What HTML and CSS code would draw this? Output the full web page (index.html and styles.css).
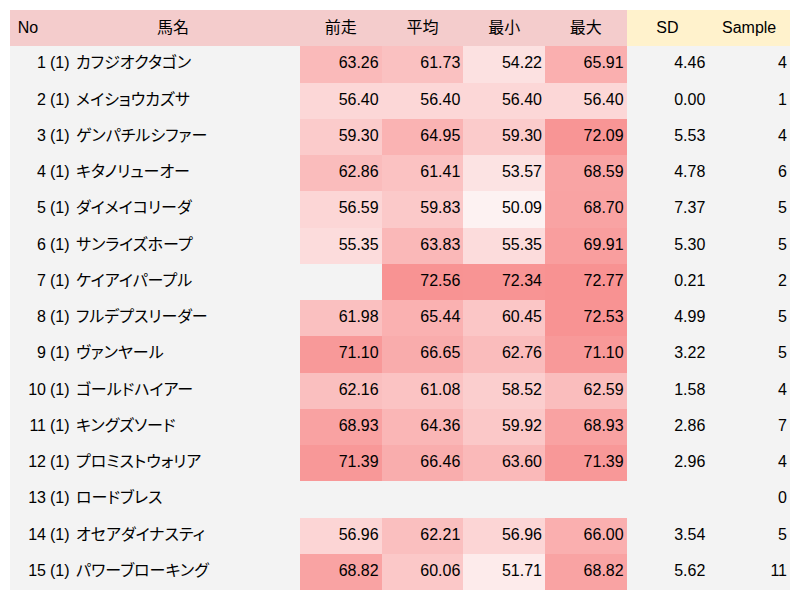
FILE: index.html
```html
<!DOCTYPE html>
<html lang="ja">
<head>
<meta charset="utf-8">
<title>馬名</title>
<link rel="stylesheet" href="styles.css">
</head>
<body>
<table class="grid">
  <colgroup>
    <col class="c-no"><col class="c-name"><col class="c-val"><col class="c-val"><col class="c-val"><col class="c-val"><col class="c-val"><col class="c-val">
  </colgroup>
  <thead>
    <tr>
      <th class="h-red">No</th><th class="h-red">馬名</th><th class="h-red">前走</th><th class="h-red">平均</th><th class="h-red">最小</th><th class="h-red">最大</th><th class="h-yel">SD</th><th class="h-yel">Sample</th>
    </tr>
  </thead>
  <tbody>
    <tr><td class="no">1</td><td class="name">(1) <span class="kana">カフジオクタゴン</span></td><td class="num" style="background:rgb(250,186,186)">63.26</td><td class="num" style="background:rgb(250,193,193)">61.73</td><td class="num" style="background:rgb(252,225,225)">54.22</td><td class="num" style="background:rgb(250,175,175)">65.91</td><td class="num">4.46</td><td class="num">4</td></tr>
    <tr><td class="no">2</td><td class="name">(1) <span class="kana">メイショウカズサ</span></td><td class="num" style="background:rgb(252,215,215)">56.40</td><td class="num" style="background:rgb(252,215,215)">56.40</td><td class="num" style="background:rgb(252,215,215)">56.40</td><td class="num" style="background:rgb(252,215,215)">56.40</td><td class="num">0.00</td><td class="num">1</td></tr>
    <tr><td class="no">3</td><td class="name">(1) <span class="kana">ゲンパチルシファー</span></td><td class="num" style="background:rgb(251,203,203)">59.30</td><td class="num" style="background:rgb(250,179,179)">64.95</td><td class="num" style="background:rgb(251,203,203)">59.30</td><td class="num" style="background:rgb(248,149,149)">72.09</td><td class="num">5.53</td><td class="num">4</td></tr>
    <tr><td class="no">4</td><td class="name">(1) <span class="kana">キタノリューオー</span></td><td class="num" style="background:rgb(250,188,188)">62.86</td><td class="num" style="background:rgb(251,194,194)">61.41</td><td class="num" style="background:rgb(252,227,227)">53.57</td><td class="num" style="background:rgb(249,164,164)">68.59</td><td class="num">4.78</td><td class="num">6</td></tr>
    <tr><td class="no">5</td><td class="name">(1) <span class="kana">ダイメイコリーダ</span></td><td class="num" style="background:rgb(252,214,214)">56.59</td><td class="num" style="background:rgb(251,201,201)">59.83</td><td class="num" style="background:rgb(253,242,242)">50.09</td><td class="num" style="background:rgb(249,163,163)">68.70</td><td class="num">7.37</td><td class="num">5</td></tr>
    <tr><td class="no">6</td><td class="name">(1) <span class="kana">サンライズホープ</span></td><td class="num" style="background:rgb(252,220,220)">55.35</td><td class="num" style="background:rgb(250,184,184)">63.83</td><td class="num" style="background:rgb(252,220,220)">55.35</td><td class="num" style="background:rgb(249,158,158)">69.91</td><td class="num">5.30</td><td class="num">5</td></tr>
    <tr><td class="no">7</td><td class="name">(1) <span class="kana">ケイアイパープル</span></td><td class="num"></td><td class="num" style="background:rgb(248,147,147)">72.56</td><td class="num" style="background:rgb(248,148,148)">72.34</td><td class="num" style="background:rgb(248,146,146)">72.77</td><td class="num">0.21</td><td class="num">2</td></tr>
    <tr><td class="no">8</td><td class="name">(1) <span class="kana">フルデプスリーダー</span></td><td class="num" style="background:rgb(250,192,192)">61.98</td><td class="num" style="background:rgb(250,177,177)">65.44</td><td class="num" style="background:rgb(251,198,198)">60.45</td><td class="num" style="background:rgb(248,147,147)">72.53</td><td class="num">4.99</td><td class="num">5</td></tr>
    <tr><td class="no">9</td><td class="name">(1) <span class="kana">ヴァンヤール</span></td><td class="num" style="background:rgb(248,153,153)">71.10</td><td class="num" style="background:rgb(249,172,172)">66.65</td><td class="num" style="background:rgb(250,188,188)">62.76</td><td class="num" style="background:rgb(248,153,153)">71.10</td><td class="num">3.22</td><td class="num">5</td></tr>
    <tr><td class="no">10</td><td class="name">(1) <span class="kana">ゴールドハイアー</span></td><td class="num" style="background:rgb(250,191,191)">62.16</td><td class="num" style="background:rgb(251,195,195)">61.08</td><td class="num" style="background:rgb(251,206,206)">58.52</td><td class="num" style="background:rgb(250,189,189)">62.59</td><td class="num">1.58</td><td class="num">4</td></tr>
    <tr><td class="no">11</td><td class="name">(1) <span class="kana">キングズソード</span></td><td class="num" style="background:rgb(249,162,162)">68.93</td><td class="num" style="background:rgb(250,182,182)">64.36</td><td class="num" style="background:rgb(251,200,200)">59.92</td><td class="num" style="background:rgb(249,162,162)">68.93</td><td class="num">2.86</td><td class="num">7</td></tr>
    <tr><td class="no">12</td><td class="name">(1) <span class="kana">プロミストウォリア</span></td><td class="num" style="background:rgb(248,152,152)">71.39</td><td class="num" style="background:rgb(249,173,173)">66.46</td><td class="num" style="background:rgb(250,185,185)">63.60</td><td class="num" style="background:rgb(248,152,152)">71.39</td><td class="num">2.96</td><td class="num">4</td></tr>
    <tr><td class="no">13</td><td class="name">(1) <span class="kana">ロードブレス</span></td><td class="num"></td><td class="num"></td><td class="num"></td><td class="num"></td><td class="num"></td><td class="num">0</td></tr>
    <tr><td class="no">14</td><td class="name">(1) <span class="kana">オセアダイナスティ</span></td><td class="num" style="background:rgb(252,213,213)">56.96</td><td class="num" style="background:rgb(250,191,191)">62.21</td><td class="num" style="background:rgb(252,213,213)">56.96</td><td class="num" style="background:rgb(250,175,175)">66.00</td><td class="num">3.54</td><td class="num">5</td></tr>
    <tr><td class="no">15</td><td class="name">(1) <span class="kana">パワーブローキング</span></td><td class="num" style="background:rgb(249,163,163)">68.82</td><td class="num" style="background:rgb(251,200,200)">60.06</td><td class="num" style="background:rgb(253,235,235)">51.71</td><td class="num" style="background:rgb(249,163,163)">68.82</td><td class="num">5.62</td><td class="num">11</td></tr>
  </tbody>
</table>
</body>
</html>
```
FILE: styles.css
```css
html, body {
  margin: 0;
  background: #ffffff;
}
body {
  padding: 10px;
  font-family: "Liberation Sans", "Noto Sans CJK JP", sans-serif;
  font-size: 16px;
  color: #000000;
}
.grid {
  border-collapse: collapse;
  border-spacing: 0;
  table-layout: fixed;
  width: 780px;
}
.c-no { width: 36px; }
.c-name { width: 254px; }
.c-val { width: 81.66px; }
.grid tr {
  height: 36.25px;
}
.grid th,
.grid td {
  padding: 0 3px 2px 3px;
  vertical-align: middle;
  white-space: nowrap;
  overflow: hidden;
  line-height: 20px;
}
.grid th {
  font-weight: normal;
  text-align: center;
  padding: 0 0 1px 0;
}
.h-red { background: #f4cccc; }
.h-yel { background: #fff2cc; }
.grid tbody td {
  background: #f3f3f3;
}
.grid td.no {
  text-align: right;
  padding-right: 0;
}
.grid td.name {
  text-align: left;
  padding-left: 4px;
}
.kana {
  margin-left: 2px;
  font-feature-settings: "palt";
}
.grid td.num {
  text-align: right;
}
```
